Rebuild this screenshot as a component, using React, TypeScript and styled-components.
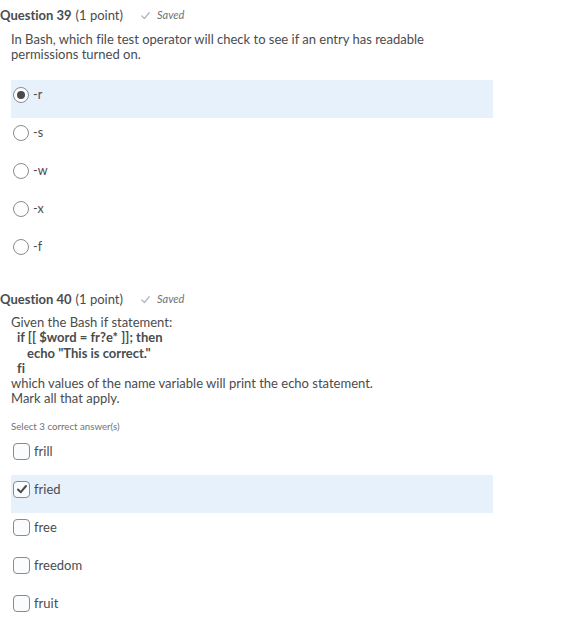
import React from "react";
import styled, { createGlobalStyle } from "styled-components";

const GlobalStyle = createGlobalStyle`
  body {
    margin: 0;
    background: #ffffff;
    font-family: Lato, "Open Sans", sans-serif;
    font-variant-ligatures: none;
    font-feature-settings: "liga" 0;
    color: #494c4e;
  }
`;

const Page = styled.div`
  width: 578px;
  padding-top: 7px;
`;

const Question = styled.section<{ $gap?: number }>`
  margin-top: ${(p) => p.$gap ?? 0}px;
`;

const Header = styled.div`
  display: flex;
  align-items: center;
  height: 16px;
  font-size: 13px;
  line-height: 16px;
`;

const QTitle = styled.span`
  font-weight: 700;
`;

const Points = styled.span`
  margin-left: 4px;
`;

const SavedTag = styled.span`
  display: inline-flex;
  align-items: center;
  margin-left: 17px;
  font-size: 11px;
  font-style: italic;
  color: #6e7376;
  gap: 6px;
`;

const Body = styled.div<{ $top: number; $lh: number }>`
  margin-top: ${(p) => p.$top}px;
  padding-left: 11px;
  font-size: 13px;
  line-height: ${(p) => p.$lh}px;
  width: 440px;
`;

const Code = styled.div<{ $indent: number }>`
  font-weight: 700;
  padding-left: ${(p) => p.$indent}px;
`;

const Hint = styled.div`
  margin-top: 13px;
  padding-left: 11px;
  font-size: 9.7px;
  line-height: 12px;
  color: #6e7376;
`;

const Options = styled.div<{ $top: number }>`
  margin-top: ${(p) => p.$top}px;
  margin-left: 11px;
  width: 482px;
  display: flex;
  flex-direction: column;
`;

const Row = styled.div<{ $selected?: boolean; $pad: number }>`
  height: 38px;
  box-sizing: border-box;
  padding: ${(p) => p.$pad}px 0 0 2px;
  display: flex;
  align-items: flex-start;
  gap: 4px;
  background: ${(p) => (p.$selected ? "#e6f1fb" : "transparent")};
  font-size: 13px;
  line-height: 16px;
`;

const Radio = styled.span<{ $checked?: boolean }>`
  width: 16px;
  height: 16px;
  box-sizing: border-box;
  border-radius: 50%;
  border: 1px solid #868c8f;
  background: #fff;
  display: flex;
  align-items: center;
  justify-content: center;
  &::after {
    content: "";
    width: 8px;
    height: 8px;
    border-radius: 50%;
    background: ${(p) => (p.$checked ? "#494c4e" : "transparent")};
  }
`;

const Box = styled.span`
  width: 17px;
  height: 17px;
  box-sizing: border-box;
  border-radius: 4px;
  border: 1px solid #868c8f;
  background: #fbfcfd;
  display: flex;
  align-items: center;
  justify-content: center;
`;

const OptLabel = styled.span<{ $big?: boolean }>`
  font-size: ${(p) => (p.$big ? 13 : 12.5)}px;
  line-height: ${(p) => (p.$big ? 17 : 16)}px;
`;

const Check = ({ size, color, weight }: { size: number; color: string; weight: number }) => (
  <svg width={size} height={size} viewBox="0 0 12 12" fill="none">
    <path d="M2 6.5 L4.8 9.2 L10 3" stroke={color} strokeWidth={weight} strokeLinecap="round" strokeLinejoin="round" />
  </svg>
);

const Saved = () => (
  <SavedTag>
    <Check size={11} color="#b8bcbe" weight={1.6} />
    Saved
  </SavedTag>
);

const radios = ["-r", "-s", "-w", "-x", "-f"];
const boxes = ["frill", "fried", "free", "freedom", "fruit"];

export default function App() {
  return (
    <Page>
      <GlobalStyle />
      <Question>
        <Header>
          <QTitle>Question 39</QTitle>
          <Points>(1 point)</Points>
          <Saved />
        </Header>
        <Body $top={9} $lh={15}>
          In Bash, which file test operator will check to see if an entry has readable permissions turned on.
        </Body>
        <Options $top={18}>
          {radios.map((r, i) => (
            <Row key={r} $selected={i === 0} $pad={7}>
              <Radio $checked={i === 0} />
              <OptLabel>{r}</OptLabel>
            </Row>
          ))}
        </Options>
      </Question>
      <Question $gap={21}>
        <Header>
          <QTitle>Question 40</QTitle>
          <Points>(1 point)</Points>
          <Saved />
        </Header>
        <Body $top={8} $lh={15.3}>
          Given the Bash if statement:
          <Code $indent={6}>if [[ $word = fr?e* ]]; then</Code>
          <Code $indent={16}>echo "This is correct."</Code>
          <Code $indent={6}>fi</Code>
          which values of the name variable will print the echo statement.
          <br />
          Mark all that apply.
        </Body>
        <Hint>Select 3 correct answer(s)</Hint>
        <Options $top={5}>
          {boxes.map((b, i) => (
            <Row key={b} $selected={i === 1} $pad={6}>
              <Box>{i === 1 && <Check size={12} color="#494c4e" weight={2} />}</Box>
              <OptLabel $big>{b}</OptLabel>
            </Row>
          ))}
        </Options>
      </Question>
    </Page>
  );
}
